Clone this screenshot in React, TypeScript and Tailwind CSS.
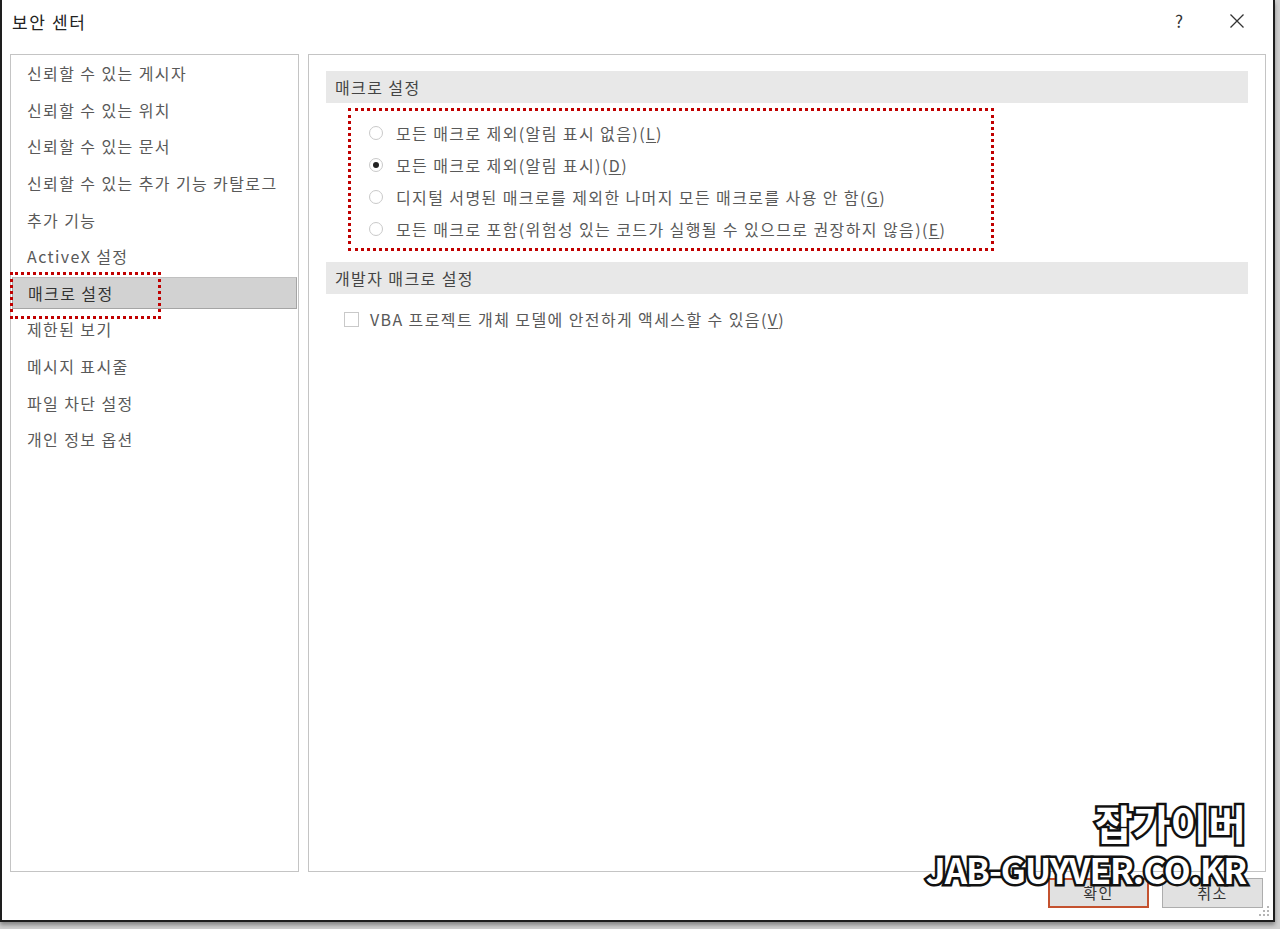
import React from "react"

const leftItems = [
  "신뢰할 수 있는 게시자",
  "신뢰할 수 있는 위치",
  "신뢰할 수 있는 문서",
  "신뢰할 수 있는 추가 기능 카탈로그",
  "추가 기능",
  "ActiveX 설정",
  "매크로 설정",
  "제한된 보기",
  "메시지 표시줄",
  "파일 차단 설정",
  "개인 정보 옵션",
]

const radios = [
  { label: "모든 매크로 제외(알림 표시 없음)", key: "L", checked: false },
  { label: "모든 매크로 제외(알림 표시)", key: "D", checked: true },
  { label: "디지털 서명된 매크로를 제외한 나머지 모든 매크로를 사용 안 함", key: "G", checked: false },
  { label: "모든 매크로 포함(위험성 있는 코드가 실행될 수 있으므로 권장하지 않음)", key: "E", checked: false },
]

const font = "font-['Malgun_Gothic','Noto_Sans_CJK_KR',sans-serif]"
const txt = "text-[16px] tracking-[1.4px]"

function Hotkey({ k }: { k: string }) {
  return (
    <span>
      (<span className="underline underline-offset-2">{k}</span>)
    </span>
  )
}

function Radio({ checked }: { checked: boolean }) {
  return (
    <span className="flex h-[14px] w-[14px] shrink-0 items-center justify-center rounded-full border border-[#c9c9c9] bg-white">
      {checked && <span className="h-[6px] w-[6px] rounded-full bg-[#222]" />}
    </span>
  )
}

export default function App() {
  return (
    <div className={`h-[929px] w-[1280px] overflow-hidden bg-[#cfcfcf] ${font}`}>
      <div className="relative flex h-[922px] w-[1275px] flex-col border-b-2 border-l-2 border-r-2 border-[#1e1e1e] bg-white shadow-[0_3px_4px_rgba(0,0,0,0.35)]">
        {/* Title bar */}
        <div className="flex h-[54px] items-start justify-between pl-[10px] pr-[28px] pt-[9px]">
          <span className="text-[17px] leading-[26px] tracking-[1.6px] text-[#222]">보안 센터</span>
          <div className="flex items-center gap-[46px] pt-[1px]">
            <span className="text-[17px] leading-[22px] text-[#333]">?</span>
            <svg width="16" height="16" viewBox="0 0 16 16" className="text-[#333]">
              <path d="M1.5 1.5 L14.5 14.5 M14.5 1.5 L1.5 14.5" stroke="currentColor" strokeWidth="1.3" fill="none" />
            </svg>
          </div>
        </div>

        {/* Body */}
        <div className="flex gap-[9px] pl-[8px]">
          {/* Left nav */}
          <div className="relative h-[818px] w-[289px] border border-[#c4c4c4]">
            {leftItems.map((item) => {
              const selected = item === "매크로 설정"
              return (
                <div key={item} className="h-[36.6px] px-[1px] py-[2.3px]">
                  <div
                    className={`flex h-full items-center whitespace-nowrap pl-[15px] ${txt} ${
                      selected
                        ? "border border-[#a5a5a5] border-t-[#c0c0c0] bg-[#d2d2d2] text-[#333]"
                        : "text-[#595959]"
                    }`}
                  >
                    {item}
                  </div>
                </div>
              )
            })}
            <div className="absolute left-[-1px] top-[217px] h-[47px] w-[151px] border-[3px] border-dotted border-[#c00000]" />
          </div>

          {/* Right content */}
          <div className="relative h-[818px] w-[958px] border border-[#c4c4c4] px-[17px] pt-[16px]">
            <div className={`flex h-[32px] items-center bg-[#e8e8e8] pl-[9px] ${txt} text-[#444]`}>매크로 설정</div>
            <div className="flex flex-col pl-[43px] pt-[14px]">
              {radios.map((r) => (
                <div key={r.key} className={`flex h-[32px] items-center gap-[13px] whitespace-nowrap ${txt} text-[#595959]`}>
                  <Radio checked={r.checked} />
                  <span>
                    {r.label}
                    <Hotkey k={r.key} />
                  </span>
                </div>
              ))}
            </div>
            <div className={`mt-[17px] flex h-[32px] items-center bg-[#e8e8e8] pl-[9px] ${txt} text-[#444]`}>개발자 매크로 설정</div>
            <div className={`mt-[9px] flex h-[32px] items-center gap-[11px] pl-[18px] ${txt} text-[#595959]`}>
              <span className="h-[15px] w-[15px] border border-[#c9c9c9] bg-white" />
              <span>
                VBA 프로젝트 개체 모델에 안전하게 액세스할 수 있음
                <Hotkey k="V" />
              </span>
            </div>
            <div className="absolute left-[39px] top-[53px] h-[143px] w-[646px] border-[3px] border-dotted border-[#c00000]" />
          </div>
        </div>

        {/* Buttons */}
        <div className="flex justify-end gap-[13px] pr-[10px] pt-[6px]">
          <button className="h-[30px] w-[101px] border-2 border-[#c4522f] bg-[#e1e1e1] text-[15px] tracking-[1.4px] text-[#333]">확인</button>
          <button className="h-[30px] w-[101px] border border-[#adadad] bg-[#e1e1e1] text-[15px] tracking-[1.4px] text-[#333]">취소</button>
        </div>

        {/* Resize grip */}
        <svg width="12" height="12" viewBox="0 0 12 12" className="absolute bottom-[3px] right-[3px]">
          {[
            [10, 2], [10, 6], [6, 6], [10, 10], [6, 10], [2, 10],
          ].map(([x, y]) => (
            <rect key={`${x}-${y}`} x={x - 1} y={y - 1} width="2" height="2" fill="#b5b5b5" />
          ))}
        </svg>

        {/* Watermark */}
        <div className="absolute right-[27px] top-[796px] flex flex-col items-end font-['Noto_Sans_CJK_KR',sans-serif] font-bold text-white [paint-order:stroke_fill] [-webkit-text-stroke:5px_#111]">
          <span className="text-[41px] leading-[52px]">잡가이버</span>
          <span className="text-[35px] leading-[42px] tracking-[-1px]">JAB-GUYVER.CO.KR</span>
        </div>
      </div>
    </div>
  )
}
